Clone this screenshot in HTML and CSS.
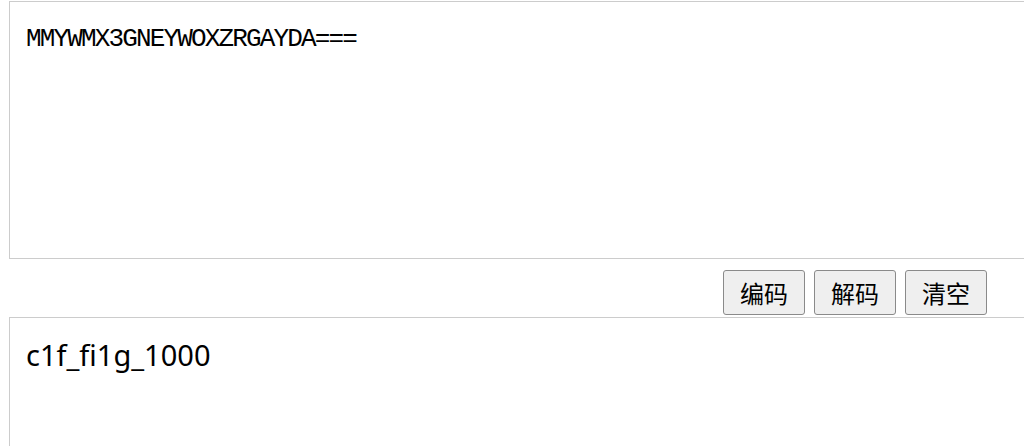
FILE: index.html
```html
<!DOCTYPE html>
<html lang="zh-CN">
<head>
	<meta charset="UTF-8">
	<title>Base32 编码解码</title>
	<link rel="stylesheet" href="styles.css">
</head>
<body>
	<div class="wrap">
		<textarea class="box box-in">MMYWMX3GNEYWOXZRGAYDA===</textarea>
		<div class="tools">
			<button>编码</button>
			<button>解码</button>
			<button>清空</button>
		</div>
		<textarea class="box box-out">c1f_fi1g_1000</textarea>
	</div>
</body>
</html>
```

FILE: styles.css
```css
*{margin: 0;padding: 0;box-sizing: border-box;}
html,body{
	width: 1024px;
	height: 446px;
	overflow: hidden;
	background: #fff;
}
.wrap{
	padding-left: 9px;
	width: 1024px;
}
.box{
	display: block;
	width: 100%;
	border: 1px solid #ccc;
	border-right: 0;
	resize: none;
	outline: none;
	overflow: hidden;
	color: #000;
	background: #fff;
	padding: 0 16px;
}
.box-in{
	height: 258px;
	margin-top: 1px;
	padding-top: 22px;
	font-family: "Liberation Mono", monospace;
	font-size: 26px;
	letter-spacing: -1.85px;
	line-height: 30px;
}
.box-out{
	height: 129px;
	padding-top: 17px;
	border-bottom: 0;
	font-family: "Noto Sans", "Noto Sans CJK SC", sans-serif;
	font-size: 29px;
	line-height: 40px;
}
.tools{
	display: flex;
	justify-content: flex-end;
	gap: 9px;
	padding: 11px 37px 2px 0;
}
.tools button{
	width: 82px;
	height: 45px;
	border: 1px solid #8a8a8a;
	border-radius: 3px;
	background: #efefef;
	font-family: "Noto Sans CJK SC", sans-serif;
	font-size: 24px;
	color: #000;
}
```
